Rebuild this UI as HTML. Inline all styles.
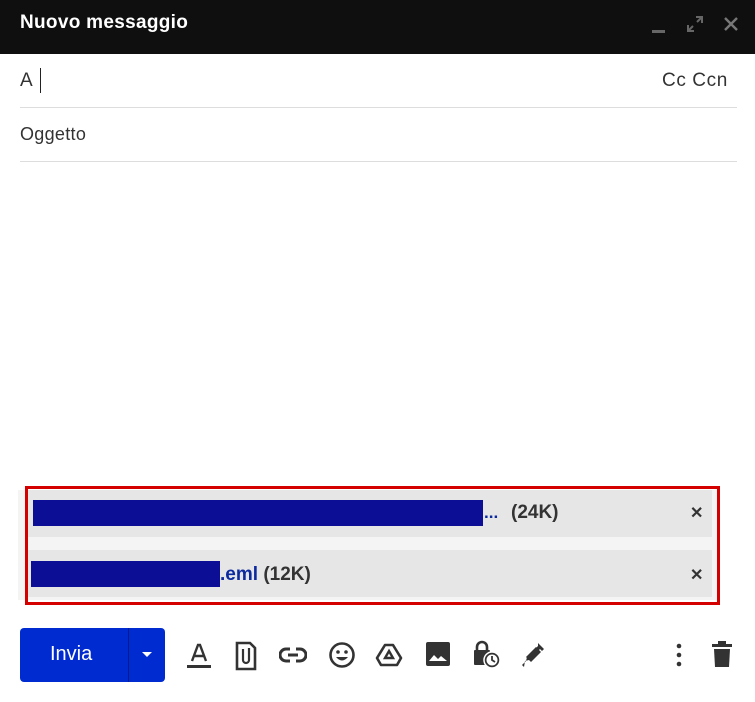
<!DOCTYPE html>
<html><head><meta charset="utf-8"><style>
*{margin:0;padding:0;box-sizing:border-box}
body{width:755px;height:702px;background:#fff;font-family:"Liberation Sans",sans-serif;position:relative;overflow:hidden;color:#222}
.abs{position:absolute}
.hdr{left:0;top:0;width:755px;height:54px;background:#0f0f0f}
.title{left:20px;top:12px;color:#fff;font-size:19px;font-weight:bold;letter-spacing:0.3px}
.line{left:20px;width:717px;height:1px;background:#ddd}
.att{background:#e6e6e6;left:28px;width:684px;height:47px}
.bar{background:#0c0f96;height:26px}
.x{font-size:16px;font-weight:bold;color:#333}
svg{position:absolute}
</style></head><body>
<div class="abs hdr"></div>
<div class="abs title">Nuovo messaggio</div>
<div class="abs" style="left:652px;top:30px;width:13px;height:3px;background:#666"></div>
<svg style="left:686px;top:15px" width="18" height="18" viewBox="0 0 18 18"><path d="M10 2h6v6M16 2l-5 5M8 16H2v-6M2 16l5-5" stroke="#666" stroke-width="2" fill="none"/></svg>
<svg style="left:723px;top:16px" width="16" height="16" viewBox="0 0 16 16"><path d="M2 2l12 12M14 2L2 14" stroke="#777" stroke-width="2.4"/></svg>
<div class="abs" style="left:20px;top:70px;font-size:19px;color:#333">A</div>
<div class="abs" style="left:40px;top:68px;width:1px;height:25px;background:#222"></div>
<div class="abs" style="left:662px;top:70px;font-size:19px;color:#333;letter-spacing:0.6px">Cc Ccn</div>
<div class="abs line" style="top:107px"></div>
<div class="abs" style="left:20px;top:124px;font-size:18px;color:#333;letter-spacing:0.3px">Oggetto</div>
<div class="abs line" style="top:161px"></div>
<div class="abs" style="left:18px;top:490px;width:700px;height:110px;background:#f4f4f4"></div>
<div class="abs att" style="top:490px"></div>
<div class="abs att" style="top:550px"></div>
<div class="abs" style="left:25px;top:486px;width:695px;height:119px;border:3px solid #d40000"></div>
<div class="abs bar" style="left:33px;top:500px;width:450px"></div>
<div class="abs" style="left:484px;top:503px;font-size:17px;font-weight:bold;color:#0c2aa0">...</div>
<div class="abs" style="left:511px;top:502px;font-size:19px;font-weight:bold;color:#333">(24K)</div>
<div class="abs x" style="left:690px;top:503px">✕</div>
<div class="abs bar" style="left:31px;top:561px;width:189px"></div>
<div class="abs" style="left:220px;top:564px;font-size:19px;font-weight:bold;color:#0c2aa0">.eml <span style="color:#333">(12K)</span></div>
<div class="abs x" style="left:690px;top:565px">✕</div>
<div class="abs" style="left:20px;top:628px;width:145px;height:54px;background:#002bd1;border-radius:4px"></div>
<div class="abs" style="left:128px;top:628px;width:1px;height:54px;background:#001c8c"></div>
<div class="abs" style="left:50px;top:643px;color:#fff;font-size:20px">Invia</div>
<svg style="left:140px;top:650px" width="14" height="10"><path d="M2 2h10L7 7z" fill="#fff"/></svg>
<svg style="left:186px;top:642px" width="26" height="28" viewBox="0 0 26 28"><path d="M6 19L12 3h2l6 16M8 14h10" stroke="#333" stroke-width="2.4" fill="none"/><rect x="1" y="23" width="24" height="3" fill="#333"/></svg>
<svg style="left:234px;top:641px" width="24" height="30" viewBox="0 0 24 30"><path d="M3 2h13l5 5v21H3z" fill="none" stroke="#333" stroke-width="2.6"/><path d="M9 8v11a3 3 0 0 0 6 0V7" fill="none" stroke="#333" stroke-width="2.2"/></svg>
<svg style="left:279px;top:643px" width="28" height="24" viewBox="0 0 28 24"><path d="M11 6H7a6 6 0 0 0 0 12h4M17 6h4a6 6 0 0 1 0 12h-4M9 12h10" fill="none" stroke="#333" stroke-width="3"/></svg>
<svg style="left:328px;top:641px" width="28" height="28" viewBox="0 0 28 28"><circle cx="14" cy="14" r="11.5" fill="none" stroke="#333" stroke-width="2.6"/><circle cx="10" cy="11" r="1.8" fill="#333"/><circle cx="18" cy="11" r="1.8" fill="#333"/><path d="M8 16q6 7 12 0z" fill="#333"/></svg>
<svg style="left:375px;top:642px" width="28" height="26" viewBox="0 0 28 26"><path d="M10 3h8l8 13-4 7H6l-4-7z" fill="none" stroke="#333" stroke-width="2.6" stroke-linejoin="round"/><path d="M14 9l4 7h-8z" fill="none" stroke="#333" stroke-width="2.4"/></svg>
<svg style="left:426px;top:642px" width="24" height="24" viewBox="0 0 24 24"><rect x="0" y="0" width="24" height="24" rx="2" fill="#333"/><path d="M3 19l5-6 4 4 3-3 6 5z" fill="#fff"/></svg>
<svg style="left:472px;top:640px" width="30" height="30" viewBox="0 0 30 30"><path d="M5 10V7a5 5 0 0 1 10 0v3" fill="none" stroke="#333" stroke-width="2.6"/><rect x="2" y="10" width="16" height="15" rx="1" fill="#333"/><circle cx="20" cy="20" r="8" fill="#333" stroke="#fff" stroke-width="1.5"/><circle cx="20" cy="20" r="5.5" fill="#fff"/><path d="M20 16v4l3 2" stroke="#333" stroke-width="1.8" fill="none"/></svg>
<svg style="left:520px;top:641px" width="28" height="28" viewBox="0 0 28 28"><path d="M18 2l6 6-2 2-2-2-11 11-4 1-1 6-2-2 4-4 1-4L18 5z" fill="#333"/><path d="M16 6l5 5-10 10-5-5z" fill="#333"/></svg>
<svg style="left:675px;top:643px" width="8" height="24"><circle cx="4" cy="3" r="2.3" fill="#333"/><circle cx="4" cy="12" r="2.3" fill="#333"/><circle cx="4" cy="21" r="2.3" fill="#333"/></svg>
<svg style="left:710px;top:641px" width="24" height="28" viewBox="0 0 24 28"><rect x="2" y="3" width="20" height="3" fill="#333"/><rect x="8" y="0" width="8" height="3" fill="#333"/><path d="M4 8h16l-1 18H5z" fill="#333"/></svg>
</body></html>
